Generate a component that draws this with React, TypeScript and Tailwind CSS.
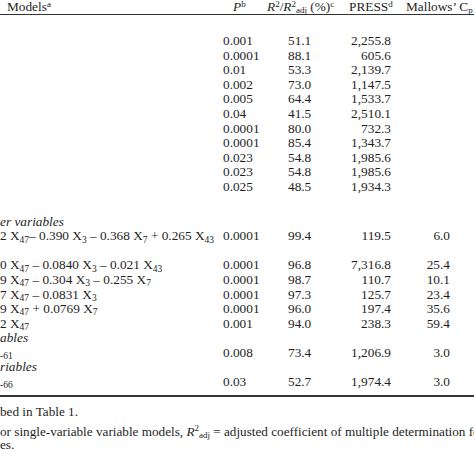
import React from 'react';

type Row = {
  model?: React.ReactNode;
  p?: string;
  r?: string;
  press?: string;
  cp?: string;
  italic?: boolean;
};

const X = ({ n }: { n: string }) => (
  <>
    X<sub className="text-[9.5px]">{n}</sub>
  </>
);

const single: Row[] = [
  { p: '0.001', r: '51.1', press: '2,255.8' },
  { p: '0.0001', r: '88.1', press: '605.6' },
  { p: '0.01', r: '53.3', press: '2,139.7' },
  { p: '0.002', r: '73.0', press: '1,147.5' },
  { p: '0.005', r: '64.4', press: '1,533.7' },
  { p: '0.04', r: '41.5', press: '2,510.1' },
  { p: '0.0001', r: '80.0', press: '732.3' },
  { p: '0.0001', r: '85.4', press: '1,343.7' },
  { p: '0.023', r: '54.8', press: '1,985.6' },
  { p: '0.023', r: '54.8', press: '1,985.6' },
  { p: '0.025', r: '48.5', press: '1,934.3' },
];

const multi: Row[] = [
  { model: 'er variables', italic: true },
  {
    model: (
      <>
        2 <X n="47" />– 0.390 <X n="3" /> – 0.368 <X n="7" /> + 0.265 <X n="43" />
      </>
    ),
    p: '0.0001',
    r: '99.4',
    press: '119.5',
    cp: '6.0',
  },
  {},
  {
    model: (
      <>
        0 <X n="47" /> – 0.0840 <X n="3" /> – 0.021 <X n="43" />
      </>
    ),
    p: '0.0001',
    r: '96.8',
    press: '7,316.8',
    cp: '25.4',
  },
  {
    model: (
      <>
        9 <X n="47" /> – 0.304 <X n="3" /> – 0.255 <X n="7" />
      </>
    ),
    p: '0.0001',
    r: '98.7',
    press: '110.7',
    cp: '10.1',
  },
  {
    model: (
      <>
        7 <X n="47" /> – 0.0831 <X n="3" />
      </>
    ),
    p: '0.0001',
    r: '97.3',
    press: '125.7',
    cp: '23.4',
  },
  {
    model: (
      <>
        9 <X n="47" /> + 0.0769 <X n="7" />
      </>
    ),
    p: '0.0001',
    r: '96.0',
    press: '197.4',
    cp: '35.6',
  },
  {
    model: (
      <>
        2 <X n="47" />
      </>
    ),
    p: '0.001',
    r: '94.0',
    press: '238.3',
    cp: '59.4',
  },
  { model: 'ables', italic: true },
  {
    model: <sub className="text-[9.5px]">-61</sub>,
    p: '0.008',
    r: '73.4',
    press: '1,206.9',
    cp: '3.0',
  },
  { model: 'riables', italic: true },
  {
    model: <sub className="text-[9.5px]">-66</sub>,
    p: '0.03',
    r: '52.7',
    press: '1,974.4',
    cp: '3.0',
  },
];

function TableRow({ row }: { row: Row }) {
  return (
    <div className="flex h-[14.6px] leading-[14.6px] whitespace-nowrap">
      <div className={`w-[223px] shrink-0 ${row.italic ? 'italic' : ''}`}>{row.model}</div>
      <div className="w-[44px] shrink-0">{row.p}</div>
      <div className="w-[78px] shrink-0 pl-[21px]">{row.r}</div>
      <div className="w-[46px] shrink-0 text-right">{row.press}</div>
      <div className="w-[59px] shrink-0 text-right">{row.cp}</div>
    </div>
  );
}

export default function App() {
  return (
    <div
      className="w-[474px] h-[474px] overflow-hidden bg-white text-[#1e1e1e] text-[13.3px]"
      style={{ fontFamily: '"Liberation Serif", "Times New Roman", serif' }}
    >
      {/* header */}
      <div className="flex h-[15px] leading-[14px] whitespace-nowrap border-b-[1.5px] border-[#333]">
        <div className="w-[223px] shrink-0 pl-[7px]">
          Models<sup className="text-[9px]">a</sup>
        </div>
        <div className="w-[44px] shrink-0 pl-[10px]">
          <i>P</i>
          <sup className="text-[9px]">b</sup>
        </div>
        <div className="w-[82px] shrink-0">
          <i>R</i>
          <sup className="text-[9px]">2</sup>/<i>R</i>
          <sup className="text-[9px]">2</sup>
          <sub className="text-[9px]">adj</sub> (%)<sup className="text-[9px]">c</sup>
        </div>
        <div className="w-[57px] shrink-0">
          PRESS<sup className="text-[9px]">d</sup>
        </div>
        <div className="shrink-0">
          Mallows’ C<sub className="text-[9px]">p</sub>
        </div>
      </div>

      <div className="pt-[19px]">
        {single.map((row, i) => (
          <TableRow key={i} row={row} />
        ))}
      </div>

      <div className="pt-[20px] pb-[5px] border-b-2 border-[#333]">
        {multi.map((row, i) => (
          <TableRow key={i} row={row} />
        ))}
      </div>

      {/* footnotes */}
      <div className="pt-[8px] text-[13.2px] leading-[13px] whitespace-nowrap">
        <div>bed in Table 1.</div>
        <div className="pt-[7px]">
          or single-variable variable models, <i>R</i>
          <sup className="text-[9px]">2</sup>
          <sub className="text-[9px]">adj</sub> = adjusted coefficient of multiple determination for
          multiple-variable models
        </div>
        <div>es.</div>
      </div>
    </div>
  );
}
